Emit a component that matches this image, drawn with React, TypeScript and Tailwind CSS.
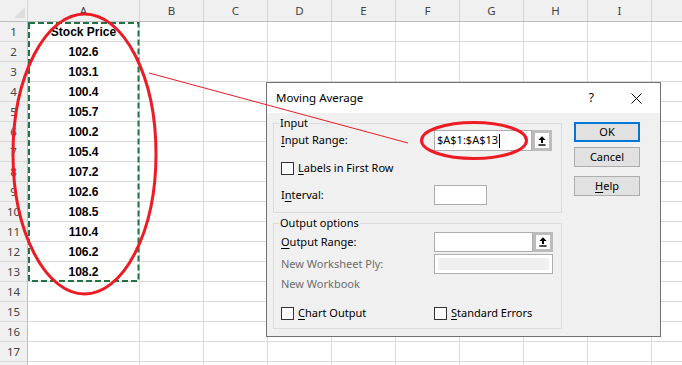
import React from 'react';

const COLS = ['A', 'B', 'C', 'D', 'E', 'F', 'G', 'H', 'I', 'J'];
const VALUES = ['Stock Price', '102.6', '103.1', '100.4', '105.7', '100.2', '105.4', '107.2', '102.6', '108.5', '110.4', '106.2', '108.2'];
const ROWS = Array.from({ length: 18 }, (_, i) => i + 1);

function UpButton() {
  return (
    <div className="w-[20px] h-full bg-[#bcbcbc] p-[3px] flex shrink-0">
      <div className="flex-1 bg-white flex items-center justify-center">
        <svg width="8" height="10" viewBox="0 0 8 10">
          <path d="M4 0.3 L7.6 4 L5 4 L5 7 L3 7 L3 4 L0.4 4 Z" fill="#000" />
          <rect x="0.4" y="8.3" width="7.2" height="1.4" fill="#000" />
        </svg>
      </div>
    </div>
  );
}

function Checkbox() {
  return <div className="w-[13px] h-[13px] border border-[#333333] bg-white shrink-0" />;
}

function U({ children }: { children: React.ReactNode }) {
  return <span className="underline underline-offset-[2px] decoration-[1px]">{children}</span>;
}

function Dialog() {
  return (
    <div className="absolute left-[266px] top-[82px] w-[395px] h-[255px] border border-[#707070] bg-[#f0f0f0] flex flex-col z-10 text-[11px] text-black font-['Noto_Sans',sans-serif]">
      <div className="h-[30px] shrink-0 bg-white flex items-center pl-[9px] pr-[18px]">
        <span className="text-[11.5px]">Moving Average</span>
        <span className="ml-auto text-[12px] mr-[37px]">?</span>
        <svg width="11" height="11" viewBox="0 0 11 11">
          <path d="M0.5 0.5 L10.5 10.5 M10.5 0.5 L0.5 10.5" stroke="#000" strokeWidth="1" />
        </svg>
      </div>
      <div className="flex pl-[6px] pt-[3px] gap-[12px]">
        <div className="flex flex-col w-[289px] gap-[3px]">
          <fieldset className="border border-[#dcdcdc] pl-[7px] pb-[7px] h-[97px] w-[289px]">
            <legend className="px-[1px] -ml-[2px] leading-[14px]">Input</legend>
            <div className="flex items-center h-[21px]">
              <span className="w-[153px]"><U>I</U>nput Range:</span>
              <div className="flex h-[21px]">
                <div className="w-[98px] h-full border border-[#adadad] bg-white flex items-center pl-[2px]">
                  <span>$A$1:$A$13</span>
                  <span className="w-px h-[14px] bg-black ml-[1px]" />
                </div>
                <UpButton />
              </div>
            </div>
            <div className="flex items-center h-[20px] mt-[7px]">
              <Checkbox />
              <span className="ml-[4px]"><U>L</U>abels in First Row</span>
            </div>
            <div className="flex items-center h-[20px] mt-[7px]">
              <span className="w-[153px]">I<U>n</U>terval:</span>
              <div className="w-[53px] h-[20px] border border-[#adadad] bg-white" />
            </div>
          </fieldset>
          <fieldset className="border border-[#dcdcdc] pl-[7px] pb-[5px] h-[113px] w-[289px]">
            <legend className="px-[1px] -ml-[2px] leading-[14px]">Output options</legend>
            <div className="flex items-center h-[20px] mt-[2px]">
              <span className="w-[153px]"><U>O</U>utput Range:</span>
              <div className="flex h-[20px]">
                <div className="w-[99px] h-full border border-[#adadad] bg-white" />
                <UpButton />
              </div>
            </div>
            <div className="flex items-center h-[20px] mt-[2px]">
              <span className="w-[153px] text-[#6d6d6d]">New Worksheet Ply:</span>
              <div className="w-[119px] h-[20px] border border-[#adadad] bg-white p-[3px] flex">
                <div className="flex-1 bg-[#f0f0f0]" />
              </div>
            </div>
            <div className="flex items-center h-[20px]">
              <span className="text-[#6d6d6d]">New Workbook</span>
            </div>
            <div className="flex items-center h-[20px] mt-[9px]">
              <div className="w-[153px] flex items-center">
                <Checkbox />
                <span className="ml-[4px]"><U>C</U>hart Output</span>
              </div>
              <Checkbox />
              <span className="ml-[4px]"><U>S</U>tandard Errors</span>
            </div>
          </fieldset>
        </div>
        <div className="flex flex-col mt-[6px]">
          <button className="w-[66px] h-[20px] bg-[#e1e1e1] border-2 border-[#0078d7] flex items-center justify-center">OK</button>
          <button className="w-[66px] h-[20px] mt-[5px] bg-[#e1e1e1] border border-[#adadad] flex items-center justify-center">Cancel</button>
          <button className="w-[66px] h-[20px] mt-[9px] bg-[#e1e1e1] border border-[#adadad] flex items-center justify-center"><U>H</U>elp</button>
        </div>
      </div>
    </div>
  );
}

export default function App() {
  return (
    <div className="relative w-[682px] h-[365px] overflow-hidden bg-white font-['Noto_Sans',sans-serif]">
      <div className="flex flex-col">
        <div className="flex h-[22px] border-b border-[#bdbdbd] bg-[#f0f0f0]">
          <div className="w-[28px] shrink-0 h-full border-r border-[#d4d4d4] relative">
            <svg width="28" height="21" viewBox="0 0 28 21" className="absolute left-0 top-0">
              <polygon points="25,7 25,18 14,18" fill="#dcdcdc" />
            </svg>
          </div>
          {COLS.map((c, i) => (
            <div
              key={c}
              className={`${i === 0 ? 'w-[112px]' : 'w-[64px]'} shrink-0 h-full border-r border-[#d4d4d4] flex items-center justify-center text-[11.5px] text-[#444444]`}
            >
              {c === 'J' ? '' : c}
            </div>
          ))}
        </div>
        {ROWS.map((r) => (
          <div key={r} className="flex h-[20px]">
            <div className="w-[28px] shrink-0 h-full bg-[#f0f0f0] border-r border-r-[#bdbdbd] border-b border-b-[#d9d9d9] flex items-center justify-center text-[11.5px] text-[#444444]">
              {r <= 17 ? r : ''}
            </div>
            {COLS.map((c, i) => (
              <div
                key={c}
                className={`${i === 0 ? 'w-[112px]' : 'w-[64px]'} shrink-0 h-full border-r border-b border-[#dadada] flex items-center justify-center font-['Liberation_Sans',Arial,sans-serif] font-bold text-[12px] text-black`}
              >
                {i === 0 && r <= 13 ? VALUES[r - 1] : ''}
              </div>
            ))}
          </div>
        ))}
      </div>
      <Dialog />
      <svg width="682" height="365" viewBox="0 0 682 365" className="absolute left-0 top-0 z-20 pointer-events-none">
        <rect x="29" y="23" width="109.5" height="258" fill="none" stroke="#217346" strokeWidth="2" strokeDasharray="6 3" />
        <ellipse cx="84.5" cy="154" rx="71.5" ry="140" fill="none" stroke="#ed1c24" strokeWidth="3" />
        <line x1="149" y1="73" x2="408" y2="143" stroke="#ed1c24" strokeWidth="1" />
        <ellipse cx="474" cy="140.5" rx="52.5" ry="18" fill="none" stroke="#ed1c24" strokeWidth="3" />
      </svg>
    </div>
  );
}
